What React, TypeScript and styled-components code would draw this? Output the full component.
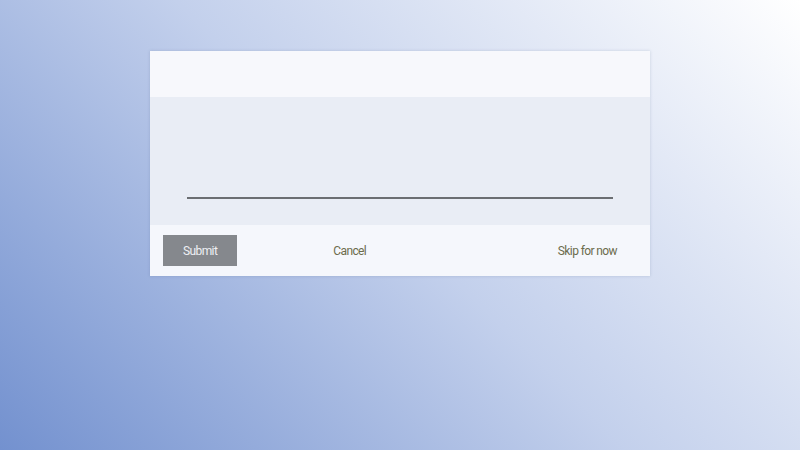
import React from 'react';
import styled, { createGlobalStyle } from 'styled-components';

const GlobalStyle = createGlobalStyle`
  html, body {
    margin: 0;
    padding: 0;
    height: 100%;
  }
  body {
    font-family: Roboto, "Noto Sans", sans-serif;
  }
`;

const Page = styled.div`
  width: 800px;
  height: 450px;
  background: linear-gradient(45deg, #7391cf 0%, #c3d0ec 50%, #ffffff 100%);
  padding-top: 51px;
  box-sizing: border-box;
  display: flex;
  justify-content: center;
  align-items: flex-start;
`;

const Card = styled.div`
  width: 500px;
  box-shadow: 0 0 3px rgba(60, 80, 120, 0.2);
  display: flex;
  flex-direction: column;
`;

const Header = styled.div`
  height: 46px;
  background: #f7f8fc;
`;

const Body = styled.div`
  height: 128px;
  background: #e9edf5;
  padding: 0 37px;
  box-sizing: border-box;
  display: flex;
  align-items: flex-start;
`;

const Input = styled.input`
  width: 100%;
  margin-top: 80px;
  height: 20px;
  border: none;
  border-bottom: 2px solid #6b6e72;
  background: transparent;
  outline: none;
  font: inherit;
  padding: 0;
`;

const Footer = styled.div`
  height: 51px;
  background: #f5f7fc;
  padding: 10px 13px;
  box-sizing: border-box;
  display: flex;
  align-items: center;
`;

const Button = styled.button<{ $primary?: boolean; $push?: boolean }>`
  height: 31px;
  padding: 0 20px;
  border: none;
  font-family: Roboto, "Noto Sans", sans-serif;
  font-size: 12px;
  letter-spacing: -0.6px;
  cursor: pointer;
  background: ${(p) => (p.$primary ? '#85888d' : 'transparent')};
  color: ${(p) => (p.$primary ? '#eef0f4' : '#6c6c4c')};
  margin-left: ${(p) => (p.$push ? 'auto' : '0')};
`;

const Spacer = styled.div`
  width: 76px;
`;

export default function App() {
  return (
    <>
      <GlobalStyle />
      <Page>
        <Card>
          <Header />
          <Body>
            <Input type="text" />
          </Body>
          <Footer>
            <Button $primary>Submit</Button>
            <Spacer />
            <Button>Cancel</Button>
            <Button $push>Skip for now</Button>
          </Footer>
        </Card>
      </Page>
    </>
  );
}
